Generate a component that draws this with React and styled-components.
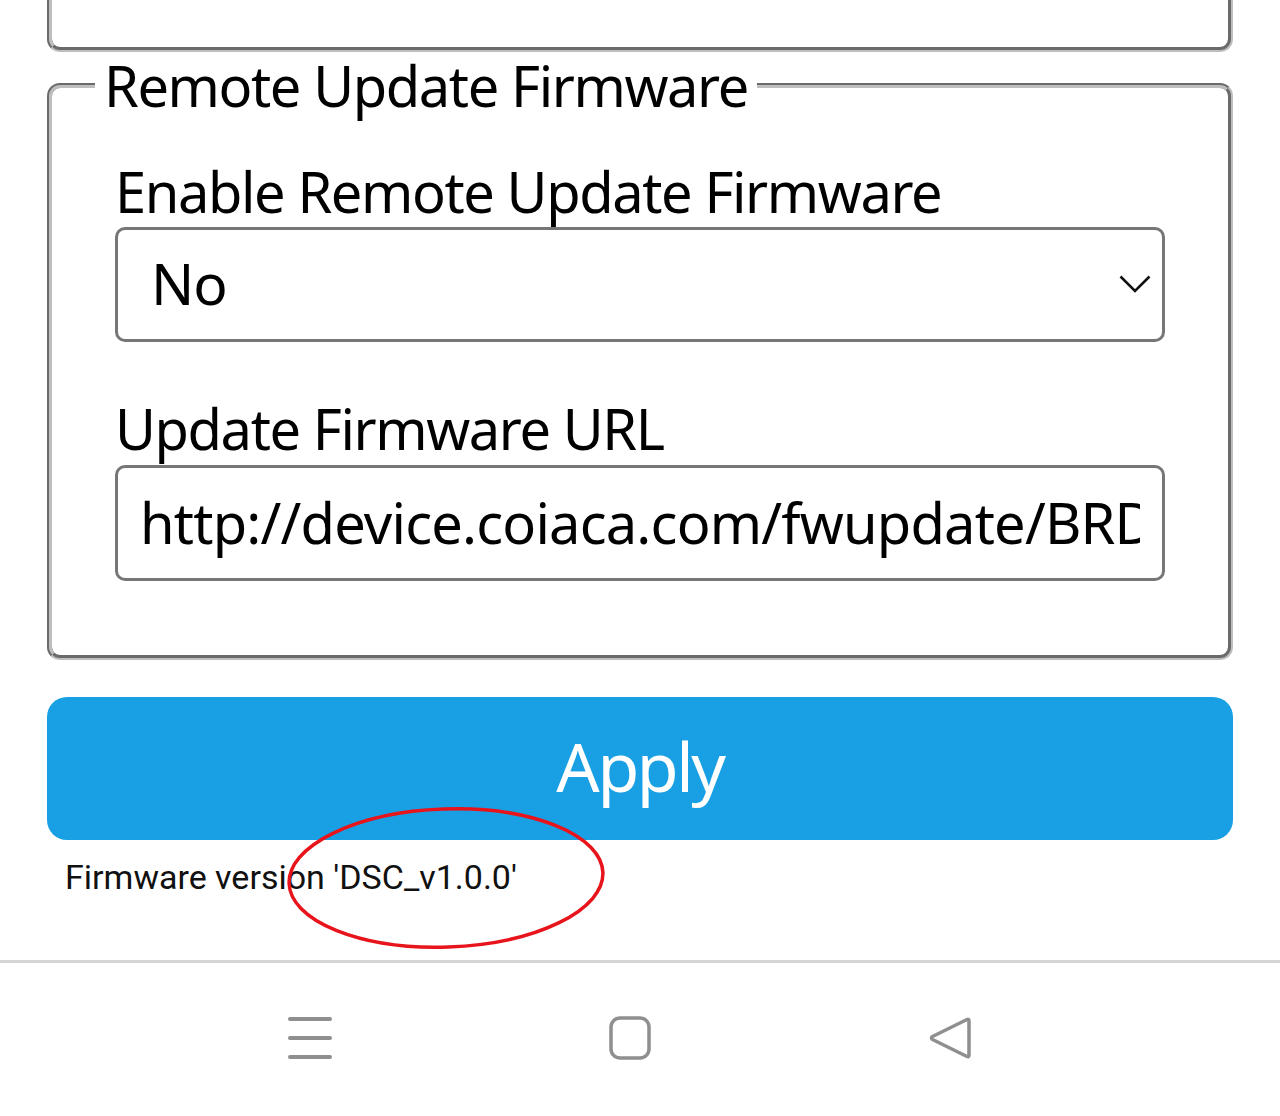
import React from "react";
import styled, { createGlobalStyle } from "styled-components";

const GlobalStyle = createGlobalStyle`
  html, body, #root { margin: 0; padding: 0; height: 100%; }
  body { background: #ffffff; font-family: "Noto Sans", "Open Sans", sans-serif; color: #000; }
  * { box-sizing: border-box; }
`;

const Screen = styled.div`
  height: 1116px;
  display: flex;
  flex-direction: column;
  overflow: hidden;
`;

const Main = styled.main`
  flex: 1;
  padding: 0 47px;
`;

const TopPanel = styled.div`
  height: 52px;
  border: 5px groove #bebebe;
  border-top: none;
  border-radius: 0 0 13px 13px;
`;

const Fieldset = styled.fieldset`
  margin: 0;
  padding: 0;
  min-width: 0;
  border: 5px groove #bebebe;
  border-radius: 13px;
`;

const Legend = styled.legend`
  margin-left: 43px;
  padding: 0 9px;
  font-size: 56px;
  line-height: 1.2;
  letter-spacing: -1.4px;
`;

const FieldBody = styled.div`
  padding: 39px 63px 74px;
  display: flex;
  flex-direction: column;
  gap: 53px;
`;

const Field = styled.div`
  display: flex;
  flex-direction: column;
`;

const Label = styled.label`
  font-size: 56px;
  line-height: 1.2;
  letter-spacing: -1.4px;
  margin-bottom: 2px;
`;

const SelectWrap = styled.div`
  position: relative;
`;

const Select = styled.select`
  appearance: none;
  -webkit-appearance: none;
  width: 100%;
  height: 115px;
  padding: 0 33px 4px;
  border: 3px solid #767676;
  border-radius: 10px;
  background: #fff;
  color: #000;
  font-family: "Noto Sans", "Open Sans", sans-serif;
  font-size: 57px;
  letter-spacing: -1px;
  outline: none;
`;

const Chevron = styled.svg`
  position: absolute;
  right: 14px;
  top: 48px;
  pointer-events: none;
`;

const TextInput = styled.input`
  width: 100%;
  height: 116px;
  padding: 0 22px 2px;
  border: 3px solid #767676;
  border-radius: 10px;
  background: #fff;
  color: #000;
  font-family: "Noto Sans", "Open Sans", sans-serif;
  font-size: 56px;
  letter-spacing: -0.8px;
  outline: none;
`;

const ApplyButton = styled.button`
  display: block;
  width: 100%;
  height: 143px;
  margin-top: 37px;
  padding: 0 0 6px;
  border: none;
  border-radius: 20px;
  background: #199fe3;
  color: #fff;
  font-family: "Noto Sans", "Open Sans", sans-serif;
  font-size: 68px;
  letter-spacing: -2.4px;
  cursor: pointer;
`;

const VersionRow = styled.div`
  position: relative;
  margin-top: 17px;
  padding-left: 18px;
  font-family: Roboto, "Liberation Sans", sans-serif;
  font-size: 34px;
  line-height: 40px;
  color: #111;
`;

const Annotation = styled.svg`
  position: absolute;
  left: 238px;
  top: -52px;
  transform: rotate(-2deg);
  pointer-events: none;
`;

const NavBar = styled.nav`
  height: 156px;
  border-top: 3px solid #d5d5d5;
  background: #fff;
  display: flex;
  align-items: center;
  justify-content: center;
  gap: 276px;
  padding: 0 20px 4px 0;
`;

const NavIcon = styled.svg`
  display: block;
  width: 44px;
  height: 44px;
  color: #8f8f8f;
`;

export default function App() {
  return (
    <>
      <GlobalStyle />
      <Screen>
        <Main>
          <TopPanel />
          <Fieldset>
            <Legend>Remote Update Firmware</Legend>
            <FieldBody>
              <Field>
                <Label htmlFor="enable">Enable Remote Update Firmware</Label>
                <SelectWrap>
                  <Select id="enable" defaultValue="no">
                    <option value="no">No</option>
                    <option value="yes">Yes</option>
                  </Select>
                  <Chevron width="32" height="18" viewBox="0 0 32 18">
                    <path d="M1.5 1.5 L16 16 L30.5 1.5" fill="none" stroke="#111" strokeWidth="2.6" />
                  </Chevron>
                </SelectWrap>
              </Field>
              <Field>
                <Label htmlFor="url">Update Firmware URL</Label>
                <TextInput
                  id="url"
                  type="text"
                  readOnly
                  value="http://device.coiaca.com/fwupdate/BRDSC/firmware.bin"
                />
              </Field>
            </FieldBody>
          </Fieldset>
          <ApplyButton>Apply</ApplyButton>
          <VersionRow>
            Firmware version 'DSC_v1.0.0'
            <Annotation width="322" height="146" viewBox="0 0 322 146">
              <ellipse cx="161" cy="73" rx="157" ry="69" fill="none" stroke="#e8141b" strokeWidth="3.5" />
            </Annotation>
          </VersionRow>
        </Main>
        <NavBar>
          <NavIcon viewBox="0 0 44 44">
            <g stroke="currentColor" strokeWidth="4" strokeLinecap="round">
              <line x1="2" y1="3" x2="42" y2="3" />
              <line x1="2" y1="22" x2="42" y2="22" />
              <line x1="2" y1="41" x2="42" y2="41" />
            </g>
          </NavIcon>
          <NavIcon viewBox="0 0 44 44">
            <rect x="3" y="2" width="38" height="40" rx="9" fill="none" stroke="currentColor" strokeWidth="3.5" />
          </NavIcon>
          <NavIcon viewBox="0 0 44 44">
            <path
              d="M39 3.5 Q41 2.5 41 5 L41 39 Q41 41.5 39 40.5 L4.5 23.5 Q2.5 22 4.5 20.5 Z"
              fill="none"
              stroke="currentColor"
              strokeWidth="3.5"
              strokeLinejoin="round"
            />
          </NavIcon>
        </NavBar>
      </Screen>
    </>
  );
}
